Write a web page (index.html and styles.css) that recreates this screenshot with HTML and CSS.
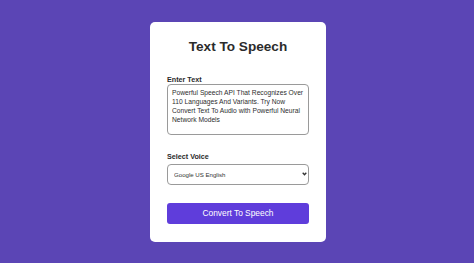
FILE: index.html
```html
<!DOCTYPE html>
<html>
<head>
<meta charset="utf-8">
<link rel="stylesheet" href="styles.css">
</head>
<body>
<div class="card">
  <h1 class="title">Text To Speech</h1>
  <label class="label" for="txt">Enter Text</label>
  <textarea id="txt" class="text">Powerful Speech API That Recognizes Over 110 Languages And Variants. Try Now Convert Text To Audio with Powerful Neural Network Models</textarea>
  <label class="label label-voice" for="voice">Select Voice</label>
  <div class="select-wrap">
    <select id="voice" class="select">
      <option>Google US English</option>
    </select>
    <svg class="chev" width="5" height="4" viewBox="0 0 5 4"><path d="M0.7 0.8 L2.5 2.8 L4.3 0.8" fill="none" stroke="#333" stroke-width="1.3"/></svg>
  </div>
  <button class="btn">Convert To Speech</button>
</div>
</body>
</html>
```
FILE: styles.css
```css
html, body {
  margin: 0;
  padding: 0;
}
body {
  box-sizing: border-box;
  width: 474px;
  height: 263px;
  padding-left: 2px;
  background: #5b45b5;
  display: flex;
  align-items: center;
  justify-content: center;
  font-family: "Liberation Sans", Arial, sans-serif;
}
.card {
  box-sizing: border-box;
  width: 176px;
  background: #fff;
  border-radius: 5px;
  padding: 17px 17px 18px;
  display: flex;
  flex-direction: column;
}
.title {
  margin: 0 0 20px;
  font-size: 13.6px;
  line-height: 16px;
  font-weight: bold;
  color: #2b2b2b;
  text-align: center;
}
.label {
  font-size: 7.2px;
  line-height: 9px;
  font-weight: bold;
  color: #2a2a2a;
}
.label-voice {
  margin-top: 17px;
  margin-bottom: 2px;
}
.text {
  box-sizing: border-box;
  width: 142px;
  height: 51px;
  margin: 0;
  padding: 3px 4px;
  border: 1px solid #9a9a9a;
  border-radius: 4px;
  resize: none;
  font-family: "Liberation Sans", Arial, sans-serif;
  font-size: 6.7px;
  line-height: 9px;
  color: #2e2e2e;
  overflow: hidden;
}
.select-wrap {
  position: relative;
  width: 142px;
  height: 21px;
}
.select {
  box-sizing: border-box;
  width: 142px;
  height: 21px;
  margin: 0;
  padding: 0 6px;
  border: 1px solid #9a9a9a;
  border-radius: 4px;
  background: #fff;
  -webkit-appearance: none;
  appearance: none;
  font-family: "Liberation Sans", Arial, sans-serif;
  font-size: 6.1px;
  color: #333;
}
.chev {
  position: absolute;
  right: 2px;
  top: 9px;
}
.btn {
  box-sizing: border-box;
  margin-top: 19px;
  width: 142px;
  height: 21px;
  border: none;
  border-radius: 3px;
  background: #5f3ddb;
  color: #fff;
  font-family: "Liberation Sans", Arial, sans-serif;
  font-size: 8.4px;
  padding: 0;
}
```
